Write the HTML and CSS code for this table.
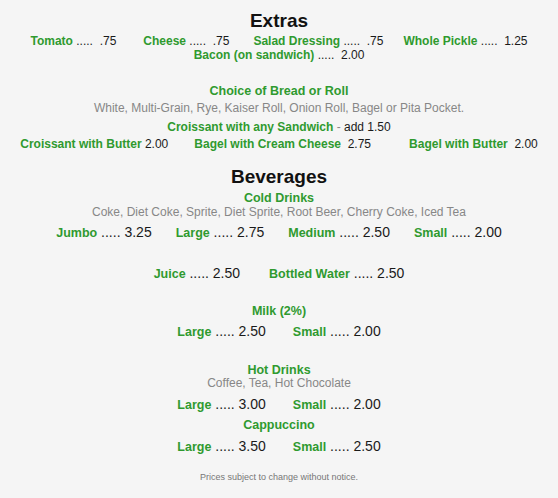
FILE: index.html
```html
<!DOCTYPE html>
<html>
<head>
<meta charset="utf-8">
<link rel="stylesheet" href="styles.css">
</head>
<body>
<div class="menu">
  <h2 class="title t-extras">Extras</h2>
  <div class="row r1 s12">
    <span class="item"><b>Tomato</b> .....&nbsp; .75</span>
    <span class="item i-2"><b>Cheese</b> .....&nbsp; .75</span>
    <span class="item i-3"><b>Salad Dressing</b> .....&nbsp; .75</span>
    <span class="item"><b>Whole Pickle</b> .....&nbsp; 1.25</span>
  </div>
  <div class="row r-bacon s12">
    <span class="item"><b>Bacon (on sandwich)</b> .....&nbsp; 2.00</span>
  </div>

  <div class="head h-choice">Choice of Bread or Roll</div>
  <div class="desc d-white">White, Multi-Grain, Rye, Kaiser Roll, Onion Roll, Bagel or Pita Pocket.</div>
  <div class="row r-crany s12"><span class="item"><b>Croissant with any Sandwich</b> <span class="gray">-</span> add 1.50</span></div>
  <div class="row r-bread s12">
    <span class="item"><b>Croissant with Butter</b> 2.00</span>
    <span class="item"><b>Bagel with Cream Cheese</b>&nbsp; 2.75</span>
    <span class="item i-last"><b>Bagel with Butter</b>&nbsp; 2.00</span>
  </div>

  <h2 class="title t-bev">Beverages</h2>
  <div class="head h-cold">Cold Drinks</div>
  <div class="desc d-coke">Coke, Diet Coke, Sprite, Diet Sprite, Root Beer, Cherry Coke, Iced Tea</div>
  <div class="row big r-jumbo">
    <span class="item"><b>Jumbo</b> ..... 3.25</span>
    <span class="item"><b>Large</b> ..... 2.75</span>
    <span class="item"><b>Medium</b> ..... 2.50</span>
    <span class="item"><b>Small</b> ..... 2.00</span>
  </div>
  <div class="row big r-juice">
    <span class="item"><b>Juice</b> ..... 2.50</span>
    <span class="item"><b>Bottled Water</b> ..... 2.50</span>
  </div>

  <div class="head h-milk">Milk (2%)</div>
  <div class="row big r-pair r-milk">
    <span class="item"><b>Large</b> ..... 2.50</span>
    <span class="item"><b>Small</b> ..... 2.00</span>
  </div>

  <div class="head h-hot">Hot Drinks</div>
  <div class="desc d-hot">Coffee, Tea, Hot Chocolate</div>
  <div class="row big r-pair r-hot">
    <span class="item"><b>Large</b> ..... 3.00</span>
    <span class="item"><b>Small</b> ..... 2.00</span>
  </div>
  <div class="head h-capp">Cappuccino</div>
  <div class="row big r-pair r-capp">
    <span class="item"><b>Large</b> ..... 3.50</span>
    <span class="item"><b>Small</b> ..... 2.50</span>
  </div>

  <p class="note">Prices subject to change without notice.</p>
</div>
</body>
</html>
```

FILE: styles.css
```css
html, body {
  margin: 0;
  padding: 0;
  background: #f5f5f5;
}
body {
  font-family: "Liberation Sans", Arial, sans-serif;
  color: #1a1a1a;
}
.menu {
  width: 558px;
  padding-top: 9px;
  text-align: center;
}
.title {
  margin: 0;
  font-size: 19px;
  line-height: 24px;
  font-weight: bold;
  color: #111;
}
.row {
  display: flex;
  justify-content: center;
  white-space: nowrap;
}
.row b {
  color: #2f9a2f;
  font-weight: bold;
}
.s12 {
  font-size: 12px;
  line-height: 14px;
}
.big {
  font-size: 14px;
  line-height: 18px;
}
.big b {
  font-size: 12.5px;
}
.head {
  color: #2f9a2f;
  font-weight: bold;
  font-size: 12.5px;
  line-height: 14px;
}
.desc {
  color: #878787;
  font-size: 12px;
  line-height: 14px;
}
.gray { color: #888; }

.r1 { margin-top: 1px; gap: 20px; }
.i-2 { margin-left: 7px; }
.i-3 { margin-left: 4px; }
.r-bacon { margin-top: 0; }
.h-choice { margin-top: 22px; }
.d-white { margin-top: 3px; }
.r-crany { margin-top: 5px; }
.r-bread { margin-top: 3px; gap: 26px; }
.i-last { margin-left: 12px; }
.t-bev { margin-top: 14px; }
.h-cold { margin-top: 2px; }
.d-coke { margin-top: 0; }
.r-jumbo { margin-top: 4px; gap: 24px; }
.r-juice { margin-top: 22px; gap: 29px; }
.h-milk { margin-top: 21px; }
.r-pair { gap: 27px; }
.r-milk { margin-top: 4px; }
.h-hot { margin-top: 23px; line-height: 13px; }
.d-hot { line-height: 13px; }
.r-hot { margin-top: 5px; }
.h-capp { margin-top: 4px; }
.r-capp { margin-top: 5px; }
.note {
  margin: 15px 0 0;
  font-size: 9px;
  line-height: 12px;
  color: #777;
}
```
